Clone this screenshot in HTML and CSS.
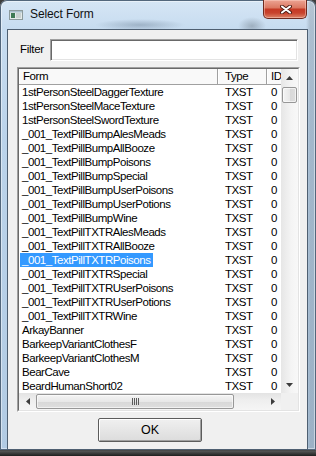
FILE: index.html
```html
<!DOCTYPE html>
<html>
<head>
<meta charset="utf-8">
<title>Select Form</title>
<link rel="stylesheet" href="styles.css">
</head>
<body>
<div class="window">
  <div class="titlebar">
    <svg class="app-icon" width="14" height="10" viewBox="0 0 14 10">
      <rect x="0.5" y="0.5" width="13" height="9" fill="#e4eaea" stroke="#8c9a9c"/>
      <rect x="1" y="1" width="12" height="1.5" fill="#a9bfcc"/>
      <rect x="2" y="3" width="4" height="5" fill="#3f7a55"/>
      <rect x="7" y="3" width="5" height="5" fill="#c9d1d1"/>
    </svg>
    <span class="title">Select Form</span>
    <div class="close">
      <svg width="12" height="9" viewBox="0 0 12 9">
        <path d="M2 1.5 L10 7.5 M10 1.5 L2 7.5" stroke="#4a1a12" stroke-width="3.8" stroke-linecap="round" fill="none"/>
        <path d="M2 1.5 L10 7.5 M10 1.5 L2 7.5" stroke="#ffffff" stroke-width="2.1" stroke-linecap="round" fill="none"/>
      </svg>
    </div>
  </div>
  <div class="client">
    <div class="filter-row">
      <label class="filter-label">Filter</label>
      <div class="textbox"></div>
    </div>
    <div class="listview">
      <div class="lv-inner">
        <div class="lv-main">
          <div class="lv-content">
            <div class="lv-header cols">
              <div class="hcell h-form">Form</div>
              <div class="hcell h-type">Type</div>
              <div class="hcell h-id">ID</div>
            </div>
            <div class="lv-rows">
              <div class="row cols"><div class="c-form"><span class="lbl">1stPersonSteelDaggerTexture</span></div><div class="c-type">TXST</div><div class="c-id">0</div></div>
              <div class="row cols"><div class="c-form"><span class="lbl">1stPersonSteelMaceTexture</span></div><div class="c-type">TXST</div><div class="c-id">0</div></div>
              <div class="row cols"><div class="c-form"><span class="lbl">1stPersonSteelSwordTexture</span></div><div class="c-type">TXST</div><div class="c-id">0</div></div>
              <div class="row cols"><div class="c-form"><span class="lbl">_001_TextPillBumpAlesMeads</span></div><div class="c-type">TXST</div><div class="c-id">0</div></div>
              <div class="row cols"><div class="c-form"><span class="lbl">_001_TextPillBumpAllBooze</span></div><div class="c-type">TXST</div><div class="c-id">0</div></div>
              <div class="row cols"><div class="c-form"><span class="lbl">_001_TextPillBumpPoisons</span></div><div class="c-type">TXST</div><div class="c-id">0</div></div>
              <div class="row cols"><div class="c-form"><span class="lbl">_001_TextPillBumpSpecial</span></div><div class="c-type">TXST</div><div class="c-id">0</div></div>
              <div class="row cols"><div class="c-form"><span class="lbl">_001_TextPillBumpUserPoisons</span></div><div class="c-type">TXST</div><div class="c-id">0</div></div>
              <div class="row cols"><div class="c-form"><span class="lbl">_001_TextPillBumpUserPotions</span></div><div class="c-type">TXST</div><div class="c-id">0</div></div>
              <div class="row cols"><div class="c-form"><span class="lbl">_001_TextPillBumpWine</span></div><div class="c-type">TXST</div><div class="c-id">0</div></div>
              <div class="row cols"><div class="c-form"><span class="lbl">_001_TextPillTXTRAlesMeads</span></div><div class="c-type">TXST</div><div class="c-id">0</div></div>
              <div class="row cols"><div class="c-form"><span class="lbl">_001_TextPillTXTRAllBooze</span></div><div class="c-type">TXST</div><div class="c-id">0</div></div>
              <div class="row cols"><div class="c-form"><span class="lbl selected">_001_TextPillTXTRPoisons</span></div><div class="c-type">TXST</div><div class="c-id">0</div></div>
              <div class="row cols"><div class="c-form"><span class="lbl">_001_TextPillTXTRSpecial</span></div><div class="c-type">TXST</div><div class="c-id">0</div></div>
              <div class="row cols"><div class="c-form"><span class="lbl">_001_TextPillTXTRUserPoisons</span></div><div class="c-type">TXST</div><div class="c-id">0</div></div>
              <div class="row cols"><div class="c-form"><span class="lbl">_001_TextPillTXTRUserPotions</span></div><div class="c-type">TXST</div><div class="c-id">0</div></div>
              <div class="row cols"><div class="c-form"><span class="lbl">_001_TextPillTXTRWine</span></div><div class="c-type">TXST</div><div class="c-id">0</div></div>
              <div class="row cols"><div class="c-form"><span class="lbl">ArkayBanner</span></div><div class="c-type">TXST</div><div class="c-id">0</div></div>
              <div class="row cols"><div class="c-form"><span class="lbl">BarkeepVariantClothesF</span></div><div class="c-type">TXST</div><div class="c-id">0</div></div>
              <div class="row cols"><div class="c-form"><span class="lbl">BarkeepVariantClothesM</span></div><div class="c-type">TXST</div><div class="c-id">0</div></div>
              <div class="row cols"><div class="c-form"><span class="lbl">BearCave</span></div><div class="c-type">TXST</div><div class="c-id">0</div></div>
              <div class="row cols"><div class="c-form"><span class="lbl">BeardHumanShort02</span></div><div class="c-type">TXST</div><div class="c-id">0</div></div>
            </div>
          </div>
          <div class="vscroll">
            <div class="sb-btn">
              <svg width="7" height="4" viewBox="0 0 7 4"><polygon points="0,4 3.5,0 7,4" fill="#3c3c3c"/></svg>
            </div>
            <div class="vtrack"><div class="vthumb"></div></div>
            <div class="sb-btn">
              <svg width="7" height="4" viewBox="0 0 7 4"><polygon points="0,0 7,0 3.5,4" fill="#3c3c3c"/></svg>
            </div>
          </div>
        </div>
        <div class="lv-bottom">
          <div class="hscroll">
            <div class="sb-btn">
              <svg width="4" height="7" viewBox="0 0 4 7"><polygon points="4,0 4,7 0,3.5" fill="#3c3c3c"/></svg>
            </div>
            <div class="htrack">
              <div class="hthumb">
                <svg width="7" height="7" viewBox="0 0 7 7">
                  <path d="M0.5 0 V7 M2.5 0 V7 M4.5 0 V7 M6.5 0 V7" stroke="#5a5a5a" stroke-width="1"/>
                </svg>
              </div>
            </div>
            <div class="sb-btn">
              <svg width="4" height="7" viewBox="0 0 4 7"><polygon points="0,0 4,3.5 0,7" fill="#3c3c3c"/></svg>
            </div>
          </div>
          <div class="corner"></div>
        </div>
      </div>
    </div>
    <button class="ok">OK</button>
  </div>
</div>
</body>
</html>
```

FILE: styles.css
```css
* { box-sizing: border-box; }
html, body { margin: 0; padding: 0; }
body {
  width: 316px;
  height: 456px;
  overflow: hidden;
  background: linear-gradient(180deg, #3d3d3d 0, #3d3d3d 450px, #555 451px, #1e1e1e 456px);
  font-family: "Liberation Sans", Arial, sans-serif;
}
.window {
  width: 316px;
  height: 450px;
  display: flex;
  flex-direction: column;
  border-radius: 7px 7px 0 0;
  background:
    radial-gradient(ellipse 45px 6px at 140px 25px, rgba(80, 100, 122, 0.35), rgba(80, 100, 122, 0)),
    radial-gradient(ellipse 14px 9px at 252px 26px, rgba(80, 90, 100, 0.35), rgba(80, 90, 100, 0)),
    linear-gradient(90deg, rgba(0,0,0,0) 0, rgba(0,0,0,0) 306px, rgba(90,100,110,0.25) 310px),
    linear-gradient(180deg, #d6e6f5 0, #c7dcf0 28px, #bbd3ea 140px, #b2cbe3 450px);
  box-shadow: inset 0 0 0 1px #53677c, inset 0 0 0 2px rgba(255, 255, 255, 0.45);
}
.titlebar {
  height: 29px;
  flex-shrink: 0;
  display: flex;
  align-items: flex-start;
}
.app-icon { margin: 10px 0 0 9px; flex-shrink: 0; }
.title {
  margin: 8px 0 0 7px;
  font-size: 12px;
  letter-spacing: -0.1px;
  line-height: 13px;
  color: #111;
}
.close {
  margin-left: auto;
  margin-right: 9px;
  width: 44px;
  height: 19px;
  border: 1px solid #6e2a1f;
  border-top: none;
  border-radius: 0 0 5px 5px;
  background: linear-gradient(180deg, #eca393 0%, #dc7a64 42%, #c53a25 52%, #c8432d 72%, #dd8468 100%);
  box-shadow: inset 0 0 0 1px rgba(255, 215, 205, 0.45);
  display: flex;
  align-items: center;
  justify-content: center;
  padding-left: 2px;
}
.client {
  flex: 1;
  margin: 0 8px 0 7px;
  border: 1px solid #4e5f71;
  background: #f0f0f0;
  padding: 0 7px 0 9px;
  display: flex;
  flex-direction: column;
}
.filter-row {
  margin-top: 9px;
  height: 22px;
  display: flex;
  align-items: center;
}
.filter-label {
  width: 33px;
  padding-left: 3px;
  font-size: 11.5px;
  letter-spacing: -0.3px;
  color: #000;
  margin-top: -2px;
}
.textbox {
  flex: 1;
  height: 22px;
  margin-right: 2px;
  background: #fff;
  border: 1px solid;
  border-color: #a0a0a0 #ffffff #ffffff #a0a0a0;
  box-shadow: inset 1px 1px 0 #696969, inset -1px -1px 0 #e3e3e3;
}
.listview {
  margin-top: 6px;
  height: 345px;
  border: 1px solid;
  border-color: #a0a0a0 #ffffff #ffffff #a0a0a0;
}
.lv-inner {
  height: 100%;
  border: 1px solid;
  border-color: #696969 #e3e3e3 #e3e3e3 #696969;
  background: #fff;
  display: flex;
  flex-direction: column;
}
.lv-main {
  flex: 1;
  display: flex;
  min-height: 0;
}
.lv-content {
  flex: 1;
  overflow: hidden;
  min-width: 0;
}
.cols {
  display: grid;
  grid-template-columns: 199px 49px 60px;
  width: 308px;
}
.lv-header {
  height: 16px;
}
.hcell {
  height: 16px;
  line-height: 15px;
  font-size: 11.5px;
  letter-spacing: -0.4px;
  color: #000;
  background: #f9f9f9;
  border-right: 1px solid #a0a0a0;
  border-bottom: 1px solid #a0a0a0;
  box-shadow: inset 1px 0 0 #fff;
  white-space: nowrap;
  overflow: hidden;
}
.h-form { padding-left: 4px; }
.h-type { padding-left: 7px; }
.h-id { padding-left: 4px; }
.row {
  height: 14px;
  line-height: 14px;
  font-size: 11.5px;
  letter-spacing: -0.45px;
  color: #000;
  white-space: nowrap;
}
.row > div { overflow: hidden; }
.c-form { padding-left: 1px; }
.c-type { padding-left: 7px; }
.c-id { padding-left: 4px; }
.lbl {
  display: inline-block;
  height: 14px;
  padding: 0 2px;
}
.lbl.selected {
  background: #3399ff;
  color: #fff;
}
.vscroll {
  width: 17px;
  flex-shrink: 0;
  display: flex;
  flex-direction: column;
  background: linear-gradient(90deg, #e6e6e6, #f4f4f4 60%, #f8f8f8);
}
.sb-btn {
  width: 17px;
  height: 17px;
  flex-shrink: 0;
  display: flex;
  align-items: center;
  justify-content: center;
}
.vtrack { flex: 1; }
.vthumb {
  margin: 1px 1px 0 1px;
  height: 16px;
  border: 1px solid #979797;
  border-radius: 2px;
  background: linear-gradient(90deg, #f4f4f4, #e8e8e8 50%, #d8d8d8 51%, #dedede);
  box-shadow: inset 0 0 0 1px rgba(255, 255, 255, 0.6);
}
.lv-bottom {
  height: 17px;
  flex-shrink: 0;
  display: flex;
}
.hscroll {
  flex: 1;
  display: flex;
  background: linear-gradient(180deg, #e3e3e3, #eeeeee 40%, #f5f5f5);
}
.htrack { flex: 1; }
.hthumb {
  margin-top: 1px;
  width: 198px;
  height: 15px;
  border: 1px solid #979797;
  border-radius: 2px;
  background: linear-gradient(180deg, #f4f4f4, #e8e8e8 50%, #d8d8d8 51%, #dedede);
  box-shadow: inset 0 0 0 1px rgba(255, 255, 255, 0.6);
  display: flex;
  align-items: center;
  justify-content: center;
}
.corner {
  width: 17px;
  flex-shrink: 0;
  background: #f0f0f0;
}
.ok {
  margin: 6px 0 0 81px;
  width: 104px;
  height: 24px;
  padding: 0;
  font-family: "Liberation Sans", Arial, sans-serif;
  font-size: 12.5px;
  color: #000;
  background: linear-gradient(180deg, #f0f0f0, #e6e6e6 50%, #dcdcdc);
  border: 1px solid #5c5c5c;
  border-radius: 2px;
  box-shadow: inset 1px 1px 0 #ffffff, inset -1px -1px 0 #a0a0a0;
}
```
